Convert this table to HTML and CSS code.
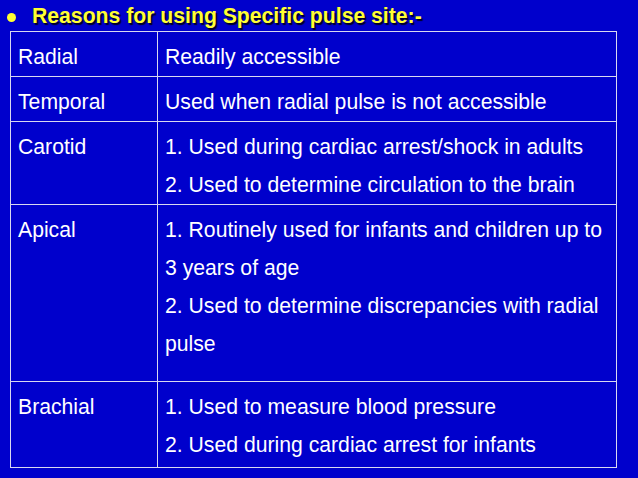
FILE: index.html
```html
<!DOCTYPE html>
<html>
<head>
<meta charset="utf-8">
<link rel="stylesheet" href="styles.css">
</head>
<body>
<div class="slide">
  <h1 class="title"><span class="bullet"></span>Reasons for using Specific pulse site:-</h1>
  <table class="sites">
    <tr>
      <td class="site">Radial</td>
      <td class="reason">Readily accessible</td>
    </tr>
    <tr>
      <td class="site">Temporal</td>
      <td class="reason">Used when radial pulse is not accessible</td>
    </tr>
    <tr>
      <td class="site">Carotid</td>
      <td class="reason">1. Used during cardiac arrest/shock in adults<br>2. Used to determine circulation to the brain</td>
    </tr>
    <tr class="tall">
      <td class="site">Apical</td>
      <td class="reason">1. Routinely used for infants and children up to 3 years of age<br>2. Used to determine discrepancies with radial pulse</td>
    </tr>
    <tr class="last">
      <td class="site">Brachial</td>
      <td class="reason">1. Used to measure blood pressure<br>2. Used during cardiac arrest for infants</td>
    </tr>
  </table>
</div>
</body>
</html>
```

FILE: styles.css
```css
html, body {
  margin: 0;
  padding: 0;
  background: #0000cc;
}
.slide {
  width: 638px;
  height: 478px;
  background: #0000cc;
  font-family: "Liberation Sans", Arial, sans-serif;
  color: #ffffff;
}
.title {
  margin: 0;
  height: 31px;
  line-height: 31px;
  font-size: 21.2px;
  font-weight: bold;
  color: #ffff33;
  text-shadow: 1.5px 1.5px 1px #000022;
  display: flex;
  align-items: center;
  padding-left: 7px;
  white-space: nowrap;
}
.bullet {
  width: 9px;
  height: 9px;
  border-radius: 50%;
  background: #ffff33;
  margin-right: 16px;
  margin-top: 4px;
  flex: none;
}
.sites {
  margin-left: 10px;
  width: 607px;
  border-collapse: collapse;
  border: 1px solid #d8d8f0;
  font-size: 21.2px;
  line-height: 38px;
  table-layout: fixed;
}
.sites td {
  border: 1px solid #d8d8f0;
  vertical-align: top;
  padding: 6px 6px 0 7px;
}
.sites td.site {
  width: 133px;
}
.sites tr.tall td {
  padding-bottom: 18px;
}
.sites tr.last td {
  padding-bottom: 3px;
}
```
